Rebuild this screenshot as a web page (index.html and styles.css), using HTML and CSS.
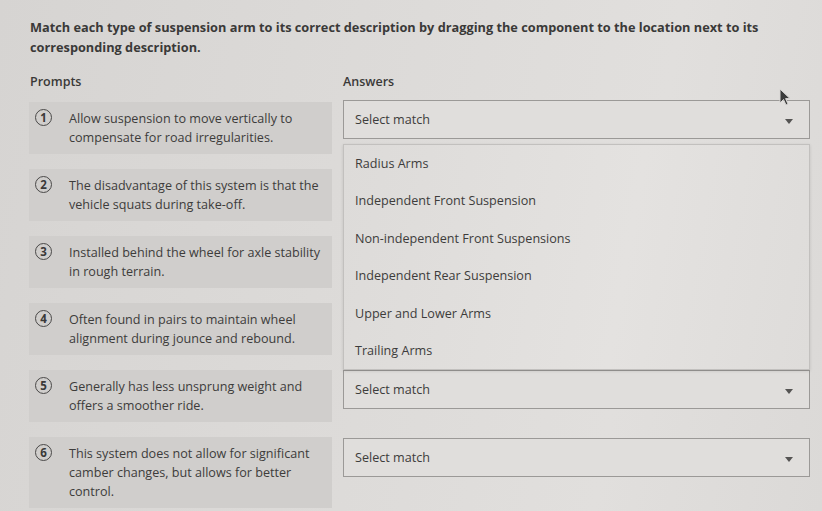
FILE: index.html
```html
<!DOCTYPE html>
<html>
<head>
<meta charset="utf-8">
<link rel="stylesheet" href="styles.css">
</head>
<body>
<div class="page">
  <p class="instructions">Match each type of suspension arm to its correct description by dragging the component to the location next to its corresponding description.</p>
  <div class="heads">
    <div class="head">Prompts</div>
    <div class="head">Answers</div>
  </div>
  <div class="rows">
    <div class="row">
      <div class="prompt"><span class="num">1</span><span class="ptext">Allow suspension to move vertically to compensate for road irregularities.</span></div>
      <div class="answer">
        <div class="select"><span>Select match</span><span class="caret"></span></div>
        <ul class="menu">
          <li>Radius Arms</li>
          <li>Independent Front Suspension</li>
          <li>Non-independent Front Suspensions</li>
          <li>Independent Rear Suspension</li>
          <li>Upper and Lower Arms</li>
          <li>Trailing Arms</li>
        </ul>
      </div>
    </div>
    <div class="row">
      <div class="prompt"><span class="num">2</span><span class="ptext">The disadvantage of this system is that the vehicle squats during take-off.</span></div>
      <div class="answer"></div>
    </div>
    <div class="row">
      <div class="prompt"><span class="num">3</span><span class="ptext">Installed behind the wheel for axle stability in rough terrain.</span></div>
      <div class="answer"></div>
    </div>
    <div class="row">
      <div class="prompt"><span class="num">4</span><span class="ptext">Often found in pairs to maintain wheel alignment during jounce and rebound.</span></div>
      <div class="answer"></div>
    </div>
    <div class="row">
      <div class="prompt"><span class="num">5</span><span class="ptext">Generally has less unsprung weight and offers a smoother ride.</span></div>
      <div class="answer"><div class="select"><span>Select match</span><span class="caret"></span></div></div>
    </div>
    <div class="row">
      <div class="prompt"><span class="num">6</span><span class="ptext">This system does not allow for significant camber changes, but allows for better control.</span></div>
      <div class="answer"><div class="select sel6"><span>Select match</span><span class="caret"></span></div></div>
    </div>
  </div>
  <svg class="cursor" width="14" height="20" viewBox="0 0 14 20"><path d="M1 1 L1 15 L4.5 11.5 L7 17 L9 16 L6.6 10.6 L11 10.6 Z" fill="#3a3a3a" stroke="#d8d6d4" stroke-width="1"/></svg>
</div>
</body>
</html>
```
FILE: styles.css
```css
html, body {
  margin: 0;
  padding: 0;
}
body {
  width: 822px;
  height: 511px;
  overflow: hidden;
  background: linear-gradient(100deg, #d6d4d2 0%, #dcdad8 40%, #e1dfdd 75%, #dbd9d7 100%);
  font-family: "Open Sans", "Noto Sans", sans-serif;
  color: #3d3c3b;
}
.page {
  position: relative;
  padding: 17px 12px 0 29px;
}
.instructions {
  margin: 0 0 0 1px;
  font-size: 12.75px;
  font-weight: 700;
  line-height: 20px;
  color: #3a3938;
  width: 770px;
}
.heads {
  display: grid;
  grid-template-columns: 314px 467px;
  margin-top: 16px;
  font-size: 12.5px;
  font-weight: 600;
  line-height: 18px;
  color: #3a3938;
}
.head:first-child { padding-left: 1px; }
.rows {
  display: flex;
  flex-direction: column;
  gap: 15px;
  margin-top: 11px;
}
.row {
  display: grid;
  grid-template-columns: 303px 467px;
  column-gap: 11px;
  align-items: start;
}
.prompt {
  display: flex;
  align-items: flex-start;
  background: #d0cecc;
  padding: 7px 10px 7px 6px;
  min-height: 38px;
  font-size: 12.6px;
  line-height: 19px;
}
.num {
  flex: none;
  width: 15px;
  height: 15px;
  border: 1.6px solid #4a4948;
  border-radius: 50%;
  font-size: 11.5px;
  font-weight: 700;
  line-height: 15px;
  text-align: center;
  margin-top: 0;
  margin-right: 18px;
  color: #3a3938;
}
.ptext {
  flex: 1;
  margin-left: -1px;
}
.answer {
  position: relative;
}
.select {
  display: flex;
  justify-content: space-between;
  align-items: center;
  height: 37px;
  border: 1px solid #9b9997;
  background: #e0dedc;
  padding: 0 16px 0 11px;
  font-size: 12.6px;
  color: #3d3c3b;
}
.row:nth-child(1) .select { margin-top: -2px; }
.row:nth-child(5) .select { margin-top: 0; }
.sel6 { margin-top: 1px; }
.caret {
  width: 0;
  height: 0;
  border-left: 4px solid transparent;
  border-right: 4px solid transparent;
  border-top: 5px solid #555453;
  margin-top: 4px;
}
.menu {
  position: absolute;
  left: 0;
  right: 0;
  top: 42px;
  margin: 0;
  padding: 0;
  list-style: none;
  background: linear-gradient(100deg, #dddbd9 0%, #e4e2e0 60%, #dedcda 100%);
  border: 1px solid #c2c0be;
  box-shadow: 0 1px 3px rgba(0,0,0,0.12);
  z-index: 2;
}
.menu li {
  height: 37.4px;
  line-height: 37.4px;
  padding-left: 11px;
  font-size: 12.6px;
  color: #3d3c3b;
}
.cursor {
  position: absolute;
  left: 779px;
  top: 88px;
}
```
